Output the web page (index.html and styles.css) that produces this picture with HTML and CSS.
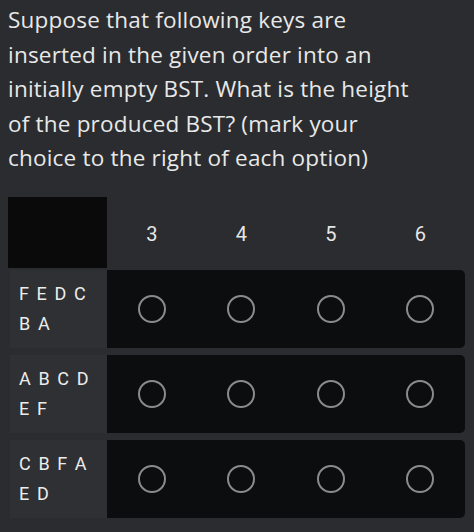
FILE: index.html
```html
<!DOCTYPE html>
<html>
<head>
<meta charset="utf-8">
<link rel="stylesheet" href="styles.css">
</head>
<body>
<div class="page">
  <p class="question">Suppose that following keys are inserted in the given order into an initially empty BST. What is the height of the produced BST? (mark your choice to the right of each option)</p>
  <div class="grid">
    <div class="corner"></div>
    <div class="head">3</div>
    <div class="head">4</div>
    <div class="head">5</div>
    <div class="head">6</div>

    <div class="label">F E D C<br>B A</div>
    <div class="options">
      <span class="radio"></span><span class="radio"></span><span class="radio"></span><span class="radio"></span>
    </div>

    <div class="label">A B C D<br>E F</div>
    <div class="options">
      <span class="radio"></span><span class="radio"></span><span class="radio"></span><span class="radio"></span>
    </div>

    <div class="label">C B F A<br>E D</div>
    <div class="options">
      <span class="radio"></span><span class="radio"></span><span class="radio"></span><span class="radio"></span>
    </div>
  </div>
</div>
</body>
</html>
```

FILE: styles.css
```css
html, body {
  margin: 0;
  padding: 0;
  background: #2a2c2f;
}
.page {
  padding: 3px 9px 0 8px;
  font-family: "Open Sans", "Roboto", sans-serif;
  color: #e8e8e8;
}
.question {
  margin: 0;
  font-size: 22.5px;
  line-height: 34.5px;
  letter-spacing: 0.2px;
  width: 405px;
}
.grid {
  margin-top: 21px;
  display: grid;
  grid-template-columns: 99px repeat(4, 1fr);
  grid-template-rows: 66px 78px 78px 78px;
  row-gap: 7px;
}
.corner {
  background: #0a0a0b;
  margin-bottom: -5px;
}
.head {
  display: flex;
  align-items: center;
  justify-content: center;
  font-family: "Roboto", sans-serif;
  font-size: 20px;
  color: #e6e6e6;
  padding-top: 8px;
}
.label {
  background: #2e3034;
  font-family: "Roboto", sans-serif;
  font-size: 18px;
  letter-spacing: 1.6px;
  line-height: 30px;
  color: #ececec;
  padding: 9px 0 0 9px;
  margin-left: 2px;
}
.options {
  grid-column: 2 / 6;
  display: grid;
  grid-template-columns: repeat(4, 1fr);
  align-items: center;
  justify-items: center;
  background: #0c0d0f;
  border-radius: 0 5px 5px 0;
}
.radio {
  width: 24px;
  height: 24px;
  border: 2px solid #8a8b8d;
  border-radius: 50%;
}
```
